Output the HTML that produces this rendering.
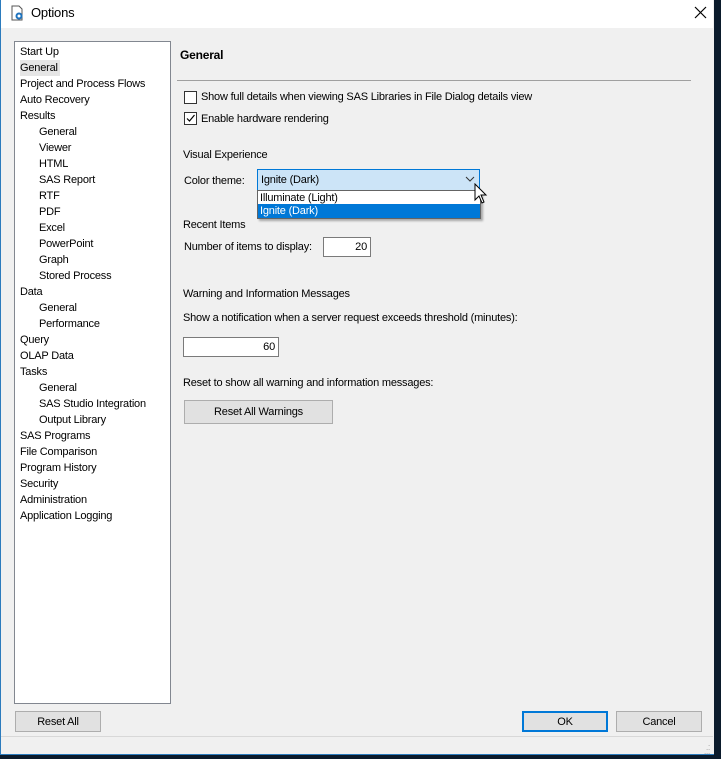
<!DOCTYPE html>
<html><head><meta charset="utf-8"><style>
*{margin:0;padding:0;box-sizing:border-box}
body{width:721px;height:759px;background:#0b1b2c;position:relative;overflow:hidden;font-family:"Liberation Sans",sans-serif;font-size:11px;letter-spacing:-0.2px;line-height:15px;color:#000}
.win{position:absolute;left:0;top:0;width:714px;height:755px;background:#f0f0f0}
.title{position:absolute;left:0;top:0;width:713px;height:28px;background:#fff}
.a{position:absolute;white-space:nowrap}
.tree{position:absolute;left:14px;top:41px;width:157px;height:663px;background:#fff;border:1px solid #828790}
.tree div{position:absolute;white-space:nowrap;line-height:16px;margin-top:1px}
.btn{position:absolute;background:#e1e1e1;border:1px solid #adadad;text-align:center;line-height:20px}
.box{position:absolute;background:#fff;border:1px solid #7a7a7a;text-align:right;padding-right:3px;line-height:19px}
.cb{position:absolute;width:13px;height:13px;border:1px solid #333;background:#fff}
</style></head><body>
<div class="win">
<div class="title"></div>
<div class="a" style="left:0;top:0;width:1px;height:755px;background:#2b7bbd"></div>
<div class="a" style="left:0;top:754px;width:714px;height:1px;background:#2b7bbd"></div>
<svg class="a" style="left:10px;top:5px" width="16" height="16" viewBox="0 0 16 16"><path d="M2 1h7l3 3v11H2z" fill="#fff" stroke="#555"/><circle cx="9" cy="11" r="3.5" fill="#1e73be"/><circle cx="9" cy="11" r="1.5" fill="#fff"/></svg>
<div class="a" style="left:31px;top:5px;font-size:13px">Options</div>
<svg class="a" style="left:694px;top:6px" width="13" height="13"><path d="M1 1L12 12M12 1L1 12" stroke="#000" stroke-width="1.2"/></svg>
<div class="tree">
<div style="left:5px;top:1px">Start Up</div>
<div style="left:5px;top:17px;background:#e5e5e5;padding-right:2px">General</div>
<div style="left:5px;top:33px">Project and Process Flows</div>
<div style="left:5px;top:49px">Auto Recovery</div>
<div style="left:5px;top:65px">Results</div>
<div style="left:24px;top:81px">General</div>
<div style="left:24px;top:97px">Viewer</div>
<div style="left:24px;top:113px">HTML</div>
<div style="left:24px;top:129px">SAS Report</div>
<div style="left:24px;top:145px">RTF</div>
<div style="left:24px;top:161px">PDF</div>
<div style="left:24px;top:177px">Excel</div>
<div style="left:24px;top:193px">PowerPoint</div>
<div style="left:24px;top:209px">Graph</div>
<div style="left:24px;top:225px">Stored Process</div>
<div style="left:5px;top:241px">Data</div>
<div style="left:24px;top:257px">General</div>
<div style="left:24px;top:273px">Performance</div>
<div style="left:5px;top:289px">Query</div>
<div style="left:5px;top:305px">OLAP Data</div>
<div style="left:5px;top:321px">Tasks</div>
<div style="left:24px;top:337px">General</div>
<div style="left:24px;top:353px">SAS Studio Integration</div>
<div style="left:24px;top:369px">Output Library</div>
<div style="left:5px;top:385px">SAS Programs</div>
<div style="left:5px;top:401px">File Comparison</div>
<div style="left:5px;top:417px">Program History</div>
<div style="left:5px;top:433px">Security</div>
<div style="left:5px;top:449px">Administration</div>
<div style="left:5px;top:465px">Application Logging</div>
</div>
<div class="a" style="left:180px;top:48px;font-weight:bold;font-size:12px">General</div>
<div class="a" style="left:177px;top:80px;width:514px;height:1px;background:#a0a0a0"></div>
<div class="cb" style="left:184px;top:91px"></div>
<div class="a" style="left:201px;top:90px">Show full details when viewing SAS Libraries in File Dialog details view</div>
<div class="cb" style="left:184px;top:112px"></div>
<svg class="a" style="left:185px;top:113px" width="11" height="11"><path d="M2 5.5L4.5 8L9.5 2" stroke="#000" fill="none" stroke-width="1.2"/></svg>
<div class="a" style="left:201px;top:112px">Enable hardware rendering</div>
<div class="a" style="left:183px;top:148px">Visual Experience</div>
<div class="a" style="left:184px;top:174px">Color theme:</div>
<div class="a" style="left:257px;top:169px;width:223px;height:22px;background:#cce4f7;border:1px solid #0078d7"></div>
<div class="a" style="left:261px;top:173px">Ignite (Dark)</div>
<svg class="a" style="left:465px;top:176px" width="10" height="7"><path d="M1 1L5 5L9 1" stroke="#333" fill="none"/></svg>
<div class="a" style="left:257px;top:190px;width:224px;height:29px;background:#fff;border:1px solid #646464;box-shadow:2px 2px 2px rgba(0,0,0,.3)"></div>
<div class="a" style="left:260px;top:191px">Illuminate (Light)</div>
<div class="a" style="left:258px;top:204px;width:222px;height:14px;background:#0078d7"></div>
<div class="a" style="left:260px;top:204px;color:#fff">Ignite (Dark)</div>
<svg class="a" style="left:474px;top:183px" width="14" height="22"><path d="M1 1V17L5 13L8 20L10 19L7 12H12Z" fill="#fff" stroke="#000"/></svg>
<div class="a" style="left:183px;top:218px">Recent Items</div>
<div class="a" style="left:184px;top:240px">Number of items to display:</div>
<div class="box" style="left:323px;top:237px;width:48px;height:20px">20</div>
<div class="a" style="left:183px;top:287px">Warning and Information Messages</div>
<div class="a" style="left:183px;top:311px">Show a notification when a server request exceeds threshold (minutes):</div>
<div class="box" style="left:183px;top:337px;width:96px;height:20px">60</div>
<div class="a" style="left:183px;top:376px">Reset to show all warning and information messages:</div>
<div class="btn" style="left:184px;top:400px;width:149px;height:24px;line-height:23px">Reset All Warnings</div>
<div class="btn" style="left:15px;top:711px;width:86px;height:21px">Reset All</div>
<div class="btn" style="left:522px;top:711px;width:86px;height:21px;border:2px solid #0078d7;line-height:18px">OK</div>
<div class="btn" style="left:616px;top:711px;width:86px;height:21px">Cancel</div>
<div class="a" style="left:1px;top:736px;width:712px;height:1px;background:#d8d8d8"></div>
<div class="a" style="left:704px;top:742px;color:#999;font-size:8px;line-height:4px">&nbsp;&nbsp;.<br>&nbsp;..<br>...</div>
</div>
</body></html>
